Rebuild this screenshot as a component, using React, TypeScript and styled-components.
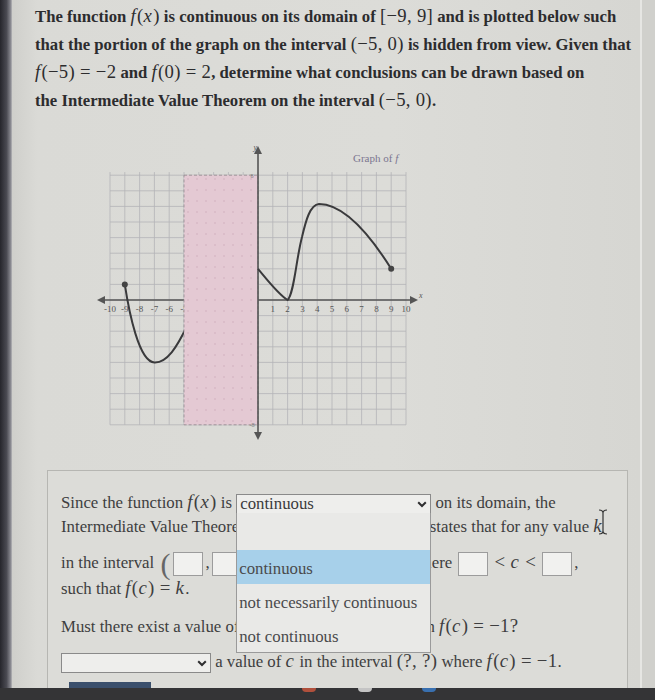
import React from 'react';
import styled, { createGlobalStyle } from 'styled-components';

const GlobalStyle = createGlobalStyle`
  html, body {
    margin: 0;
    padding: 0;
    background: #d9d9d5;
  }
`;

const Screen = styled.div`
  display: flex;
  flex-direction: column;
  width: 655px;
  height: 700px;
  overflow: hidden;
  background: #d9d9d5;
`;

const Body = styled.div`
  display: flex;
  flex: 1;
  min-height: 0;
`;

const Bezel = styled.div`
  flex: none;
  width: 12px;
  background: linear-gradient(to right, #26262c, #4a4a52 55%, #8c8c93 90%, #b9b9bb);
`;

const Page = styled.div`
  flex: 1;
  display: flex;
  flex-direction: column;
  background: linear-gradient(to right, #cfcfcb, #dadad6 4%, #dcdcd8 60%, #d6d6d2);
`;

const Edge = styled.div`
  flex: none;
  width: 13px;
  border-left: 2px solid #e6e6e3;
  background: #d0d0cc;
`;

const Prompt = styled.div`
  padding: 2px 0 0 23px;
  font-family: "Liberation Serif", "Times New Roman", serif;
  font-weight: 700;
  font-size: 16.7px;
  line-height: 27px;
  color: #2c2c2e;
  white-space: nowrap;
`;

const Math = styled.span`
  font-family: "Liberation Serif", "DejaVu Serif", serif;
  font-weight: 400;
  font-size: 1.12em;
  letter-spacing: 0.3px;
`;

const V = styled.i`
  font-style: italic;
  padding-right: 1px;
`;

const Figure = styled.div`
  margin: 28px 0 0 83px;
  width: 330px;
  height: 300px;
`;

const Panel = styled.div`
  position: relative;
  flex: 1;
  display: flex;
  flex-direction: column;
  margin: 28px 0 0 35px;
  width: 581px;
  box-sizing: border-box;
  border: 1px solid #b6b6b2;
  border-bottom: none;
  background: #dcdcd8;
  padding: 19px 0 0 13px;
  font-family: "Liberation Serif", "Times New Roman", serif;
  font-size: 16.8px;
  color: #3e3e40;
`;

const Line = styled.div<{ $h: number; $mt?: number }>`
  height: ${p => p.$h}px;
  line-height: ${p => p.$h}px;
  margin-top: ${p => p.$mt ?? 0}px;
  white-space: nowrap;
`;

const Box = styled.span`
  display: inline-block;
  width: 30px;
  height: 24px;
  box-sizing: border-box;
  border: 1px solid #9c9c9c;
  background: #f1f1ef;
  vertical-align: middle;
  margin: 0 2px;
`;

const Paren = styled.span`
  display: inline-block;
  font-size: 30px;
  font-weight: 300;
  color: #666;
  vertical-align: middle;
  line-height: 24px;
  margin: 0 1px 0 2px;
`;

const SelectBox = styled.span<{ $w: number }>`
  position: relative;
  display: inline-block;
  width: ${p => p.$w}px;
  height: 20px;
  box-sizing: border-box;
  border: 1px solid #8a8a8a;
  background: #eeeeec;
  vertical-align: middle;
  line-height: 18px;
  padding-left: 3px;
  text-align: left;
  color: #3a3a3c;
`;

const Chevron = styled.svg`
  position: absolute;
  right: 3px;
  top: 6px;
`;

const List = styled.div`
  position: absolute;
  top: 100%;
  left: -1px;
  right: -1px;
  z-index: 2;
  box-sizing: border-box;
  height: 140px;
  padding-top: 3px;
  border: 1px solid #9a9a9a;
  border-top: none;
  background: #e9e9e7;
`;

const Option = styled.div<{ $on?: boolean }>`
  height: 34px;
  line-height: 38px;
  padding-left: 2px;
  color: #4a4a4c;
  background: ${p => (p.$on ? '#a7d0ea' : 'transparent')};
`;

const Cursor = styled.svg`
  position: absolute;
  left: 549px;
  top: 38px;
`;

const Button = styled.div`
  margin: auto 0 0 8px;
  width: 82px;
  height: 6px;
  background: #3a4f6c;
`;

const TaskBar = styled.div`
  flex: none;
  height: 12px;
  display: flex;
  background: #343436;
`;

const TrayDot = styled.span<{ $c: string; $ml: number }>`
  width: 14px;
  height: 4px;
  margin-left: ${p => p.$ml}px;
  border-radius: 0 0 7px 7px;
  background: ${p => p.$c};
  opacity: 0.8;
`;

function Select({ w, value, open }: { w: number; value?: string; open?: boolean }) {
  return (
    <SelectBox $w={w}>
      {value}
      <Chevron width="10" height="7" viewBox="0 0 10 7">
        <polyline points="1.2,1.2 5,5 8.8,1.2" fill="none" stroke="#2e2e30" strokeWidth="2" />
      </Chevron>
      {open && (
        <List>
          <Option />
          <Option $on>continuous</Option>
          <Option>not necessarily continuous</Option>
          <Option>not continuous</Option>
        </List>
      )}
    </SelectBox>
  );
}

// graph coordinates: 14.8px per unit across, 15.6px per unit up
const OX = 163;
const OY = 158;
const UX = 14.8;
const UY = 15.6;
const px = (x: number) => OX + UX * x;
const py = (y: number) => OY - UY * y;
const range = (a: number, b: number) => Array.from({ length: b - a + 1 }, (_, i) => a + i);

function Graph() {
  return (
    <svg width="330" height="300" viewBox="0 0 330 300" fontFamily="Liberation Serif, serif">
      <defs>
        <pattern id="dots" width="9" height="11" patternUnits="userSpaceOnUse">
          <circle cx="3" cy="4" r="0.7" fill="#c9a9b6" />
        </pattern>
      </defs>
      <text x="258" y="20" fontSize="11" fill="#7b7690">
        Graph of <tspan fontStyle="italic">f</tspan>
      </text>
      {range(-10, 10).map(x => (
        <line key={'v' + x} x1={px(x)} x2={px(x)} y1={py(8.2)} y2={py(-8)} stroke="#b4b4b8" strokeWidth="0.8" />
      ))}
      {range(-8, 8).map(y => (
        <line key={'h' + y} x1={px(-10)} x2={px(10)} y1={py(y)} y2={py(y)} stroke="#b4b4b8" strokeWidth="0.8" />
      ))}
      <line x1="6" x2="318" y1={OY} y2={OY} stroke="#555" strokeWidth="1.6" />
      <polygon points={`2,${OY} 10,${OY - 4} 10,${OY + 4}`} fill="#555" />
      <polygon points={`323,${OY} 315,${OY - 4} 315,${OY + 4}`} fill="#555" />
      <text x="324" y={OY - 2} fontSize="8" fontStyle="italic" fill="#555">x</text>
      {range(-10, -5).map(x => (
        <text key={'l' + x} x={px(x)} y={OY + 12} fontSize="9" fill="#555" textAnchor="middle">{x}</text>
      ))}
      {range(1, 10).map(x => (
        <text key={'r' + x} x={px(x)} y={OY + 12} fontSize="9" fill="#555" textAnchor="middle">{x}</text>
      ))}
      <path
        d={`M${px(-9)},${py(1)} C34,170 44,220 ${px(-7)},220.4 C72,221 82,205 92,184`}
        fill="none"
        stroke="#3a3a3c"
        strokeWidth="2"
      />
      <circle cx={px(-9)} cy={py(1)} r="3" fill="#444" />
      <rect
        x={px(-5)}
        y={py(8)}
        width={UX * 5}
        height={UY * 16}
        fill="#e4c9d3"
        stroke="#9a9095"
        strokeWidth="0.9"
        strokeDasharray="3 2"
      />
      <rect x={px(-5)} y={py(8)} width={UX * 5} height={UY * 16} fill="url(#dots)" />
      <text x={px(0) - 6} y={py(8) + 3} fontSize="6" fill="#777" textAnchor="middle">8</text>
      <text x={px(0) - 6} y={py(-8) + 2} fontSize="6" fill="#777" textAnchor="middle">-8</text>
      <line x1={OX} x2={OX} y1="9" y2="293" stroke="#555" strokeWidth="1.6" />
      <polygon points={`${OX},4 ${OX - 4},12 ${OX + 4},12`} fill="#555" />
      <polygon points={`${OX},298 ${OX - 4},290 ${OX + 4},290`} fill="#555" />
      <text x={OX - 1} y="8" fontSize="8" fontStyle="italic" fill="#555" textAnchor="end">y</text>
      <path
        d={`M${OX},${py(2)} C170,135 183,152 ${px(2)},${OY} C199,152 201,118 207,95 C211,78 215,63 224,62 C245,62 270,85 ${px(9)},${py(2)}`}
        fill="none"
        stroke="#3a3a3c"
        strokeWidth="2"
      />
      <circle cx={px(9)} cy={py(2)} r="3" fill="#444" />
    </svg>
  );
}

export default function App() {
  return (
    <Screen>
      <GlobalStyle />
      <Body>
        <Bezel />
        <Page>
          <Prompt>
            <div>
              The function <Math><V>f</V>(<V>x</V>)</Math> is continuous on its domain of <Math>[−9, 9]</Math> and is plotted below such
            </div>
            <div>
              that the portion of the graph on the interval <Math>(−5, 0)</Math> is hidden from view. Given that
            </div>
            <div>
              <Math><V>f</V>(−5) = −2</Math> and <Math><V>f</V>(0) = 2</Math>, determine what conclusions can be drawn based on
            </div>
            <div>
              the Intermediate Value Theorem on the interval <Math>(−5, 0)</Math>.
            </div>
          </Prompt>

          <Figure>
            <Graph />
          </Figure>

          <Panel>
            <Line $h={24}>
              Since the function <Math><V>f</V>(<V>x</V>)</Math> is <Select w={195} value="continuous" open /> on its domain, the
            </Line>
            <Line $h={24}>
              Intermediate Value Theorem <Select w={169} /> states that for any value <Math><V>k</V></Math>
            </Line>
            <Line $h={28} $mt={10}>
              in the interval <Paren>(</Paren><Box />,<Box /><Paren>)</Paren>, there exists a value <Math><V>c</V></Math> where <Box /> <Math>&lt; <V>c</V> &lt;</Math> <Box />,
            </Line>
            <Line $h={24}>
              such that <Math><V>f</V>(<V>c</V>) = <V>k</V></Math>.
            </Line>
            <Line $h={24} $mt={14}>
              Must there exist a value of <Math><V>c</V></Math> in the interval (−5, 0) with <Math><V>f</V>(<V>c</V>) = −1?</Math>
            </Line>
            <Line $h={24} $mt={11}>
              <Select w={150} /> a value of <Math><V>c</V></Math> in the interval <Math>(?, ?)</Math> where <Math><V>f</V>(<V>c</V>) = −1</Math>.
            </Line>
            <Cursor width="12" height="26" viewBox="0 0 12 26">
              <path d="M2,1 Q6,1 6,4 L6,22 Q6,25 2,25 M10,1 Q6,1 6,4 M6,22 Q6,25 10,25" fill="none" stroke="#333" strokeWidth="1.2" />
            </Cursor>
            <Button />
          </Panel>
        </Page>
        <Edge />
      </Body>
      <TaskBar>
        <TrayDot $c="#d0573e" $ml={302} />
        <TrayDot $c="#e8e8e8" $ml={42} />
        <TrayDot $c="#3b7fd0" $ml={50} />
      </TaskBar>
    </Screen>
  );
}
